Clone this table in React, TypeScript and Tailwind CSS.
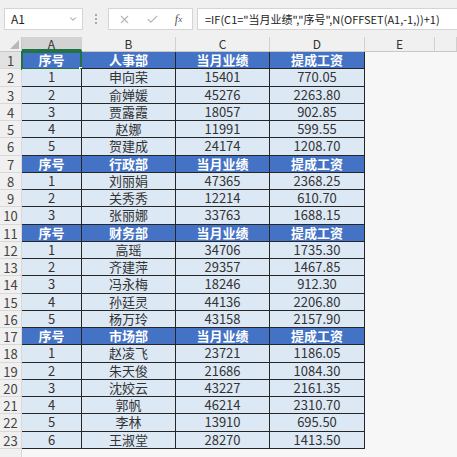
import { FiX, FiCheck, FiChevronDown } from "react-icons/fi";

type Row = { header?: string; no?: number; name?: string; sales?: string; pay?: string };

const sections: { dept: string; people: [string, string, string][] }[] = [
  {
    dept: "人事部",
    people: [
      ["申向荣", "15401", "770.05"],
      ["俞婵媛", "45276", "2263.80"],
      ["贾露霞", "18057", "902.85"],
      ["赵娜", "11991", "599.55"],
      ["贺建成", "24174", "1208.70"],
    ],
  },
  {
    dept: "行政部",
    people: [
      ["刘丽娟", "47365", "2368.25"],
      ["关秀秀", "12214", "610.70"],
      ["张丽娜", "33763", "1688.15"],
    ],
  },
  {
    dept: "财务部",
    people: [
      ["高瑶", "34706", "1735.30"],
      ["齐建萍", "29357", "1467.85"],
      ["冯永梅", "18246", "912.30"],
      ["孙廷灵", "44136", "2206.80"],
      ["杨万玲", "43158", "2157.90"],
    ],
  },
  {
    dept: "市场部",
    people: [
      ["赵凌飞", "23721", "1186.05"],
      ["朱天俊", "21686", "1084.30"],
      ["沈姣云", "43227", "2161.35"],
      ["郭帆", "46214", "2310.70"],
      ["李林", "13910", "695.50"],
      ["王淑堂", "28270", "1413.50"],
    ],
  },
];

const rows: Row[] = sections.flatMap((s) => [
  { header: s.dept },
  ...s.people.map(([name, sales, pay], i) => ({ no: i + 1, name, sales, pay })),
]);

const font = { fontFamily: '"Noto Sans CJK SC", "Liberation Sans", sans-serif' };

function TopBar() {
  return (
    <div className="h-[37px] bg-[#f0f0f0] flex items-start pt-[8px] pl-[4px] text-[12px] text-[#222]">
      <div className="w-[79px] h-[22px] bg-white border border-[#d4d4d4] flex items-center justify-between pl-[6px] pr-[4px]">
        <span>A1</span>
        <FiChevronDown className="w-[10px] h-[10px] text-[#777]" />
      </div>
      <div className="w-[25px] h-[22px] flex flex-col items-center justify-center gap-[2px]">
        <span className="w-[2px] h-[2px] bg-[#aaa]" />
        <span className="w-[2px] h-[2px] bg-[#aaa]" />
        <span className="w-[2px] h-[2px] bg-[#aaa]" />
      </div>
      <div className="w-[85px] h-[22px] bg-white border border-[#d4d4d4] flex items-center text-[#b5b5b5]">
        <div className="w-[30px] flex justify-center"><FiX className="w-[13px] h-[13px]" /></div>
        <div className="w-[26px] flex justify-center"><FiCheck className="w-[13px] h-[13px]" /></div>
        <div className="w-[27px] flex justify-center text-[#555] italic text-[12px]" style={{ fontFamily: '"Liberation Serif", serif' }}>
          f<span className="text-[9px] mt-[3px]">x</span>
        </div>
      </div>
      <div className="ml-[4px] flex-1 h-[22px] bg-white border border-[#d4d4d4] border-r-0 flex items-center pl-[7px] whitespace-nowrap overflow-hidden text-[11px]">
        =IF(C1="当月业绩","序号",N(OFFSET(A1,-1,))+1)
      </div>
    </div>
  );
}

const colWidths = ["w-[60px]", "w-[94px]", "w-[94px]", "w-[95px]"];

function ColumnHeader() {
  const cols = [
    { l: "A", w: "w-[60px]", sel: true },
    { l: "B", w: "w-[94px]" },
    { l: "C", w: "w-[94px]" },
    { l: "D", w: "w-[95px]" },
    { l: "E", w: "w-[70px]" },
    { l: "", w: "flex-1" },
  ];
  return (
    <div className="h-[15px] flex bg-[#f0f0f0] border-b border-[#c8c8c8] text-[12px] text-[#333] leading-[14px]">
      <div className="w-[22px] relative border-r border-[#c8c8c8]">
        <div className="absolute right-[2px] bottom-[2px] w-0 h-0 border-l-[9px] border-l-transparent border-b-[9px] border-b-[#b8b8b8]" />
      </div>
      {cols.map((c, i) => (
        <div
          key={i}
          className={`${c.w} text-center border-r border-[#d0d0d0] ${c.sel ? "bg-[#d3d3d3] border-b-2 border-b-[#217346]" : ""}`}
        >
          {c.l}
        </div>
      ))}
    </div>
  );
}

function DataRow({ r, idx }: { r: Row; idx: number }) {
  const isHead = !!r.header;
  const cells = isHead ? ["序号", r.header!, "当月业绩", "提成工资"] : [String(r.no), r.name!, r.sales!, r.pay!];
  return (
    <div className="h-[17.26px] flex">
      <div
        className={`w-[22px] shrink-0 text-center text-[13px] leading-[17px] border-r border-b border-[#d8d8d8] text-[#444] ${
          idx === 0 ? "bg-[#e2e2e2]" : "bg-[#f0f0f0]"
        }`}
      >
        {idx + 1}
      </div>
      {cells.map((c, i) => (
        <div
          key={i}
          className={`${colWidths[i]} shrink-0 relative text-center text-[13px] leading-[16px] border-r border-b border-[#262626] ${
            isHead ? "bg-[#4472c4] text-white font-bold" : "bg-[#dde8f5] text-[#333]"
          }`}
        >
          {c}
          {idx === 0 && i === 0 && (
            <div className="absolute -left-[1px] -top-[1px] w-[61px] h-[19px] border-2 border-[#217346]">
              <div className="absolute -right-[4px] -bottom-[4px] w-[5px] h-[5px] bg-[#217346] border border-white" />
            </div>
          )}
        </div>
      ))}
      <div className="flex-1 bg-[#f7f7f7]" />
    </div>
  );
}

export default function App() {
  return (
    <div className="w-[457px] h-[457px] overflow-hidden bg-[#f7f7f7]" style={font}>
      <TopBar />
      <ColumnHeader />
      <div className="flex flex-col">
        {rows.map((r, i) => (
          <DataRow key={i} r={r} idx={i} />
        ))}
        <div className="h-[17px] flex">
          <div className="w-[22px] bg-[#f0f0f0] border-r border-[#d8d8d8]" />
          <div className="flex-1 bg-[#f7f7f7]" />
        </div>
      </div>
    </div>
  );
}
